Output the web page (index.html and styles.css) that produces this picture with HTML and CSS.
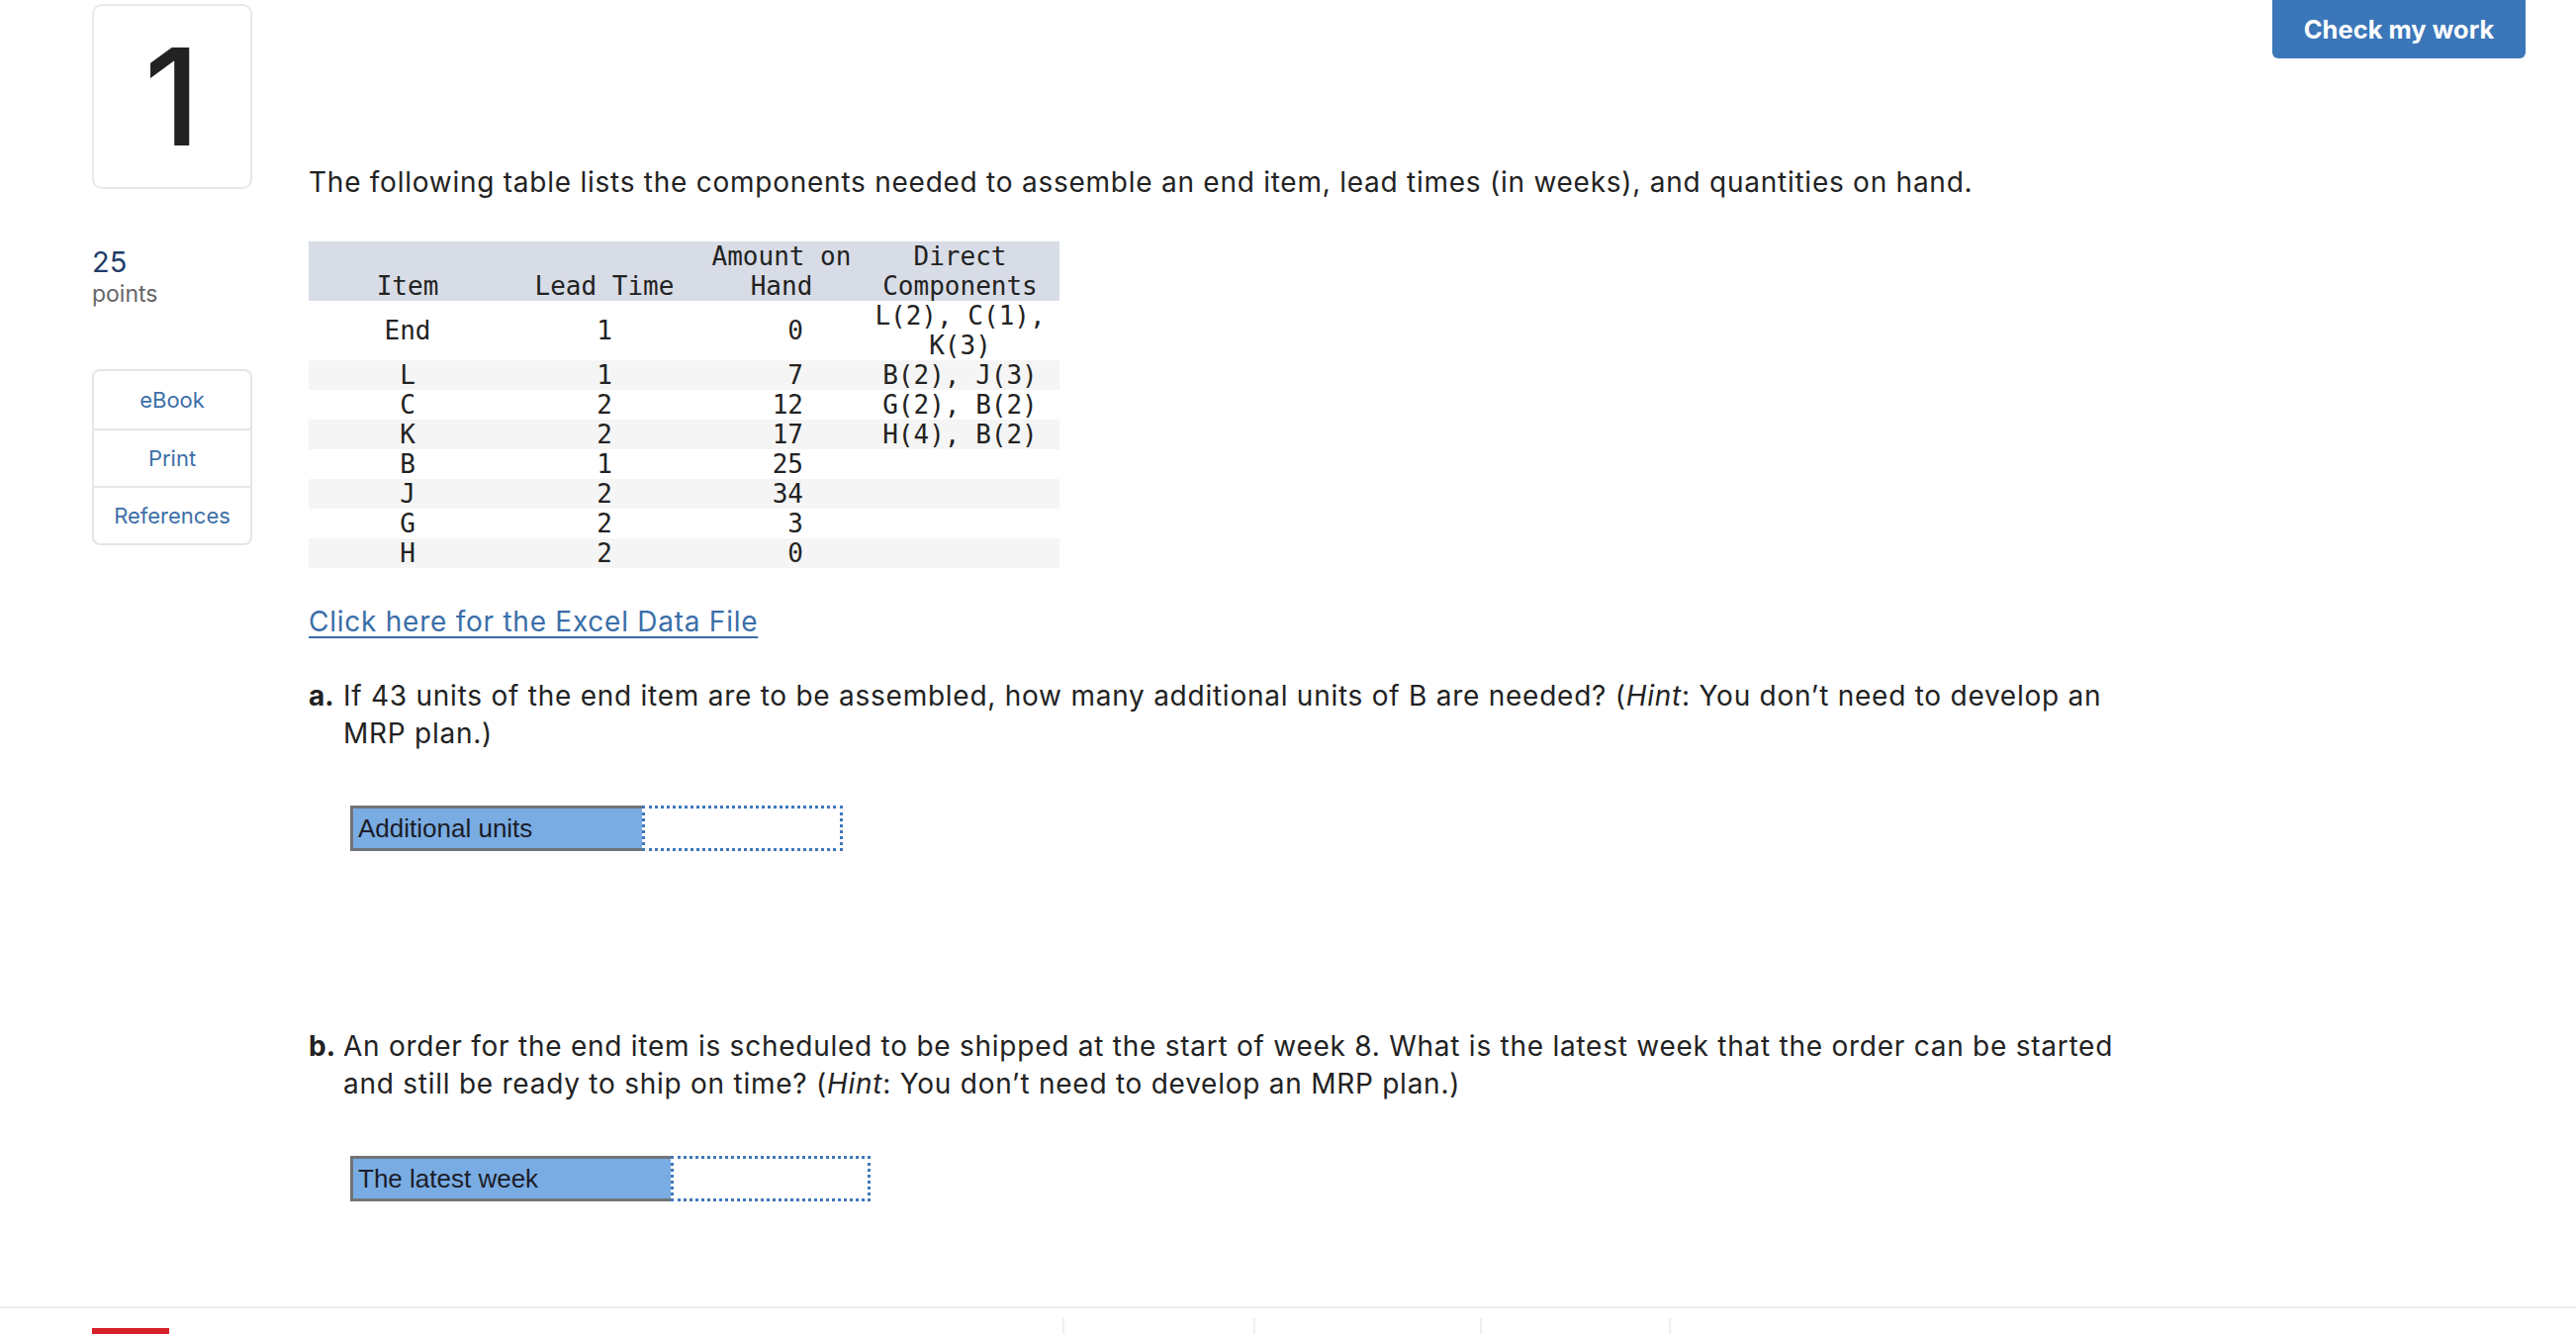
FILE: index.html
```html
<!DOCTYPE html>
<html lang="en">
<head>
<meta charset="utf-8">
<title>Question 1</title>
<link rel="stylesheet" href="styles.css">
</head>
<body>
<div class="page">
  <aside class="side">
    <div class="qnum">1</div>
    <div class="points">
      <div class="pts-val">25</div>
      <div class="pts-label">points</div>
    </div>
    <nav class="tools">
      <a class="tool">eBook</a>
      <a class="tool">Print</a>
      <a class="tool">References</a>
    </nav>
  </aside>
  <main class="content">
    <div class="topbar"><button class="check" type="button">Check my work</button></div>
    <p class="intro">The following table lists the components needed to assemble an end item, lead times (in weeks), and quantities on hand.</p>
    <table class="data">
      <thead>
        <tr><th class="c1">Item</th><th class="c2">Lead Time</th><th class="c3">Amount on Hand</th><th class="c4">Direct Components</th></tr>
      </thead>
      <tbody>
        <tr><td class="c1">End</td><td class="c2">1</td><td class="c3 num">0</td><td class="c4">L(2), C(1), K(3)</td></tr>
        <tr><td class="c1">L</td><td class="c2">1</td><td class="c3 num">7</td><td class="c4">B(2), J(3)</td></tr>
        <tr><td class="c1">C</td><td class="c2">2</td><td class="c3 num">12</td><td class="c4">G(2), B(2)</td></tr>
        <tr><td class="c1">K</td><td class="c2">2</td><td class="c3 num">17</td><td class="c4">H(4), B(2)</td></tr>
        <tr><td class="c1">B</td><td class="c2">1</td><td class="c3 num">25</td><td class="c4"></td></tr>
        <tr><td class="c1">J</td><td class="c2">2</td><td class="c3 num">34</td><td class="c4"></td></tr>
        <tr><td class="c1">G</td><td class="c2">2</td><td class="c3 num">3</td><td class="c4"></td></tr>
        <tr><td class="c1">H</td><td class="c2">2</td><td class="c3 num">0</td><td class="c4"></td></tr>
      </tbody>
    </table>
    <p class="link-line"><a class="excel">Click here for the Excel Data File</a></p>
    <div class="q q-a">
      <span class="q-letter">a.</span>
      <span class="q-text">If 43 units of the end item are to be assembled, how many additional units of B are needed? (<i>Hint</i>: You don’t need to develop an MRP plan.)</span>
    </div>
    <div class="answer answer-a"><span class="alabel">Additional units</span><span class="ainput"></span></div>
    <div class="q q-b">
      <span class="q-letter">b.</span>
      <span class="q-text">An order for the end item is scheduled to be shipped at the start of week 8. What is the latest week that the order can be started and still be ready to ship on time? (<i>Hint</i>: You don’t need to develop an MRP plan.)</span>
    </div>
    <div class="answer answer-b"><span class="alabel">The latest week</span><span class="ainput"></span></div>
  </main>
</div>
<footer class="foot">
  <div class="foot-row">
    <div class="logo"></div>
    <div class="foot-nav"><span class="fn fn1"></span><span class="fn fn2"></span><span class="fn fn3"></span></div>
  </div>
</footer>
</body>
</html>
```
FILE: styles.css
```css
* { box-sizing: border-box; }
html, body { margin: 0; padding: 0; background: #fff; }
body { font-family: "Inter", "Lato", sans-serif; color: #222; }

.page {
  display: grid;
  grid-template-columns: 162px 1fr;
  column-gap: 57px;
  padding: 4px 51px 106px 93px;
}

.side { display: flex; flex-direction: column; }
.qnum {
  height: 187px;
  border: 2px solid #e8e8e8;
  border-radius: 10px;
  display: flex; align-items: center; justify-content: center;
  font-family: "Inter", sans-serif;
  font-weight: 500;
  font-size: 136px; line-height: 1; color: #222;
}
.points { margin-top: 56px; }
.pts-val { font-size: 29px; line-height: 36px; color: #1f3d6b; }
.pts-label { font-size: 23px; line-height: 28px; color: #666; }
.tools {
  margin-top: 62px;
  border: 2px solid #e6e6e6;
  border-radius: 8px;
  display: flex; flex-direction: column;
}
.tool {
  height: 58px;
  display: flex; align-items: center; justify-content: center;
  color: #3d6fa8; font-size: 22px;
}
.tool + .tool { border-top: 2px solid #e6e6e6; }

.content { min-width: 0; }
.topbar { display: flex; justify-content: flex-end; margin-top: -4px; }
.check {
  width: 256px; height: 59px;
  background: #3b76b9; color: #fff;
  border: none; border-radius: 0 0 6px 6px;
  font-family: "Inter", sans-serif; font-weight: 700; font-size: 25.5px;
  padding: 0;
}
.intro { margin: 106px 0 0; font-size: 28px; line-height: 38px; letter-spacing: 0.75px; }

.data {
  margin-top: 41px;
  border-collapse: collapse;
  font-family: "DejaVu Sans Mono", monospace;
  font-size: 26px; line-height: 30px; color: #222;
}
.data th { font-weight: normal; background: #d8dce6; vertical-align: bottom; padding: 0; }
.data td { padding: 0; text-align: center; vertical-align: middle; }
.data tbody tr:nth-child(even) td { background: #f5f5f5; }
.c1 { width: 200px; text-align: center; }
.c2 { width: 198px; text-align: center; }
.c3 { width: 160px; text-align: center; }
.c4 { width: 201px; text-align: center; }
.data td.num { text-align: right; padding-right: 58px; }

.link-line { margin: 35px 0 0; font-size: 28px; line-height: 38px; letter-spacing: 0.75px; }
.excel { color: #3a6ea8; text-decoration: underline; text-underline-offset: 5px; text-decoration-thickness: 2px; }

.q { display: flex; margin-top: 37px; font-size: 28px; line-height: 38px; letter-spacing: 0.75px; max-width: 1853px; }
.q-letter { width: 35px; flex: none; font-weight: 700; letter-spacing: 0; }
.q-b { margin-top: 178px; }

.answer { display: flex; height: 46px; margin: 54px 0 0 42px; font-family: "Liberation Sans", Arial, sans-serif; font-size: 26px; color: #1c1c28; }
.alabel {
  background: #79ace3;
  border: 3px solid #707478; border-right: none;
  display: flex; align-items: center; padding-left: 5px;
}
.ainput { border: 3px dotted #3f77bb; background: #fff; }
.answer-a .alabel { width: 295px; }
.answer-a .ainput { width: 203px; }
.answer-b .alabel { width: 324px; }
.answer-b .ainput { width: 202px; }

.foot { border-top: 2px solid #eeeeee; height: 40px; overflow: hidden; }
.foot-row { display: flex; height: 100%; }
.logo { width: 78px; margin-left: 93px; margin-top: 20px; background: #d6202a; }
.foot-nav { display: flex; margin-left: 903px; margin-top: 10px; }
.fn { border-left: 2px solid #f0f0f0; }
.fn1 { width: 193px; }
.fn2 { width: 229px; }
.fn3 { width: 193px; border-right: 2px solid #f0f0f0; }
```
